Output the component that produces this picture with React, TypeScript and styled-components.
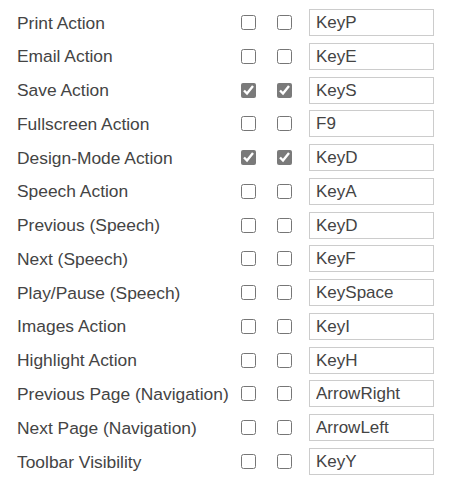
import React from "react";
import styled, { createGlobalStyle } from "styled-components";

const Global = createGlobalStyle`
  html, body { margin: 0; padding: 0; background: #ffffff; }
  body { font-family: "Liberation Sans", Arial, sans-serif; color: #444; }
`;

const List = styled.div`
  display: grid;
  grid-auto-rows: 33.77px;
  padding-top: 5.7px;
  width: 449px;
`;

const Row = styled.div`
  display: grid;
  grid-template-columns: 241px 15px 21px 15px 17px 125px;
  align-items: center;
`;

const Label = styled.span`
  padding-left: 17px;
  padding-top: 1px;
  font-size: 17.4px;
  color: #444;
  white-space: nowrap;
`;

const Check = styled.input.attrs({ type: "checkbox" })<{ $col: number }>`
  grid-column: ${(p) => p.$col};
  margin: 0;
  width: 15px;
  height: 15px;
  accent-color: #7a7a7a;
`;

const KeyInput = styled.input.attrs({ type: "text" })`
  grid-column: 6;
  box-sizing: border-box;
  width: 125px;
  height: 27px;
  margin: 0;
  padding: 1px 6px 0;
  border: 1px solid #cccccc;
  border-radius: 0;
  outline: none;
  font-family: "Liberation Sans", Arial, sans-serif;
  font-size: 17px;
  color: #444;
  background: #fff;
`;

const rows: { label: string; a: boolean; b: boolean; key: string }[] = [
  { label: "Print Action", a: false, b: false, key: "KeyP" },
  { label: "Email Action", a: false, b: false, key: "KeyE" },
  { label: "Save Action", a: true, b: true, key: "KeyS" },
  { label: "Fullscreen Action", a: false, b: false, key: "F9" },
  { label: "Design-Mode Action", a: true, b: true, key: "KeyD" },
  { label: "Speech Action", a: false, b: false, key: "KeyA" },
  { label: "Previous (Speech)", a: false, b: false, key: "KeyD" },
  { label: "Next (Speech)", a: false, b: false, key: "KeyF" },
  { label: "Play/Pause (Speech)", a: false, b: false, key: "KeySpace" },
  { label: "Images Action", a: false, b: false, key: "KeyI" },
  { label: "Highlight Action", a: false, b: false, key: "KeyH" },
  { label: "Previous Page (Navigation)", a: false, b: false, key: "ArrowRight" },
  { label: "Next Page (Navigation)", a: false, b: false, key: "ArrowLeft" },
  { label: "Toolbar Visibility", a: false, b: false, key: "KeyY" },
];

export default function App() {
  return (
    <>
      <Global />
      <List>
        {rows.map((r, i) => (
          <Row key={i}>
            <Label>{r.label}</Label>
            <Check $col={2} defaultChecked={r.a} />
            <Check $col={4} defaultChecked={r.b} />
            <KeyInput defaultValue={r.key} />
          </Row>
        ))}
      </List>
    </>
  );
}
